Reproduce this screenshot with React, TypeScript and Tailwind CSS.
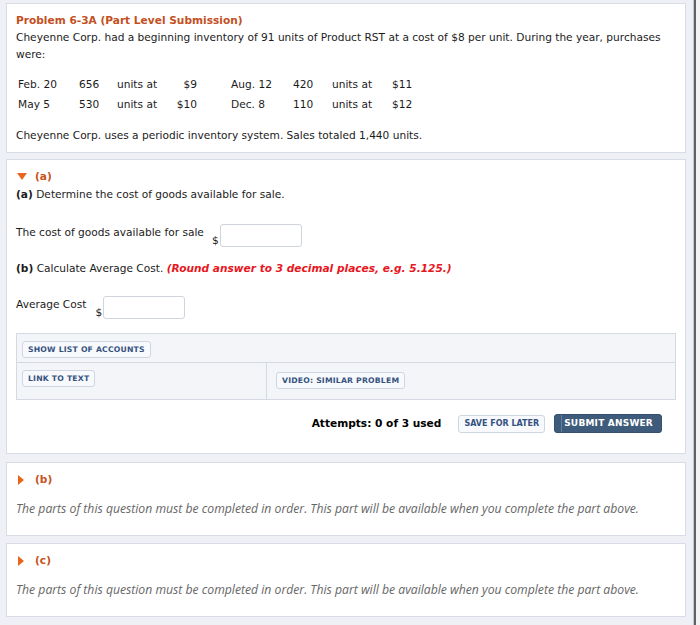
const body = { fontFamily: '"DejaVu Sans", Verdana, sans-serif' };
const note = { fontFamily: '"Open Sans", "DejaVu Sans", sans-serif' };

/**
 * Small toolbar button
 */
const ToolButton = ({ label }: { label: string }) => (
  <button className="h-[17px] px-[5px] rounded-[3px] border border-[#cfd5e1] bg-[#f8f9fc] text-[7.7px] font-bold text-[#34527f] leading-none tracking-[0.2px]">
    {label}
  </button>
);

const DownTriangle = () => (
  <svg width="10" height="7" viewBox="0 0 10 7" className="mr-[8px]">
    <path d="M0 0 H10 L5 7 Z" fill="#e8661c" />
  </svg>
);

const RightTriangle = () => (
  <svg width="6" height="10" viewBox="0 0 6 10" className="mr-[11px]">
    <path d="M0 0 L6 5 L0 10 Z" fill="#e8661c" />
  </svg>
);

const purchases = [
  { a: ['Feb. 20', '656', '$9'], b: ['Aug. 12', '420', '$11'] },
  { a: ['May 5', '530', '$10'], b: ['Dec. 8', '110', '$12'] },
];

/**
 * Locked part card (b), (c)
 */
const LockedPart = ({ letter, className }: { letter: string; className: string }) => (
  <div className={`bg-white border border-[#d8dce6] px-[9px] pt-[8px] pb-[18px] ${className}`}>
    <div className="flex items-center h-[17px] pl-[2px]">
      <RightTriangle />
      <span className="text-[10.6px] font-bold text-[#c9521d]">({letter})</span>
    </div>
    <p style={note} className="mt-[12px] text-[12.2px] leading-[17px] italic text-[#666]">
      The parts of this question must be completed in order. This part will be available when you complete the part above.
    </p>
  </div>
);

export default function App() {
  return (
    <div style={body} className="min-h-screen bg-[#eef0f5] flex text-[#1b1b1b]">
      <div className="flex-1 pl-[6px] pr-[7px] pt-[3px] flex flex-col">
        {/* Problem statement */}
        <div className="bg-white border border-[#d8dce6] px-[9px] pt-[8px] pb-[8px] text-[10.6px] leading-[17px]">
          <h1 className="font-bold text-[#c4501f]">Problem 6-3A (Part Level Submission)</h1>
          <p>
            Cheyenne Corp. had a beginning inventory of 91 units of Product RST at a cost of $8 per unit. During the year, purchases were:
          </p>
          <div className="mt-[11px]">
            {purchases.map((row, i) => (
              <div key={i} className="flex items-center h-[20px]">
                <span className="w-[63px] pl-[2px]">{row.a[0]}</span>
                <span className="w-[38px]">{row.a[1]}</span>
                <span className="w-[48px]">units at</span>
                <span className="w-[32px] text-right">{row.a[2]}</span>
                <span className="w-[62px] ml-[34px]">{row.b[0]}</span>
                <span className="w-[39px]">{row.b[1]}</span>
                <span className="w-[60px]">units at</span>
                <span>{row.b[2]}</span>
              </div>
            ))}
          </div>
          <p className="mt-[13px]">Cheyenne Corp. uses a periodic inventory system. Sales totaled 1,440 units.</p>
        </div>

        {/* Part (a) */}
        <div className="mt-[6px] bg-white border border-[#d8dce6] px-[9px] pt-[7px] pb-[20px] text-[10.6px] leading-[17px]">
          <div className="flex items-center h-[19px] pl-[1px]">
            <DownTriangle />
            <span className="font-bold text-[#c9521d]">(a)</span>
          </div>
          <p>
            <span className="font-bold">(a)</span> Determine the cost of goods available for sale.
          </p>
          <div className="flex items-start h-[23px] mt-[21px]">
            <span>The cost of goods available for sale</span>
            <span className="ml-[8px] mt-[9px] leading-[14px]">$</span>
            <input className="ml-[1px] w-[82px] h-[23px] border border-[#cfd3da] rounded-[3px] bg-white" />
          </div>
          <p className="mt-[13px]">
            <span className="font-bold">(b)</span> Calculate Average Cost.{' '}
            <span className="font-bold italic text-[#e8161d]">(Round answer to 3 decimal places, e.g. 5.125.)</span>
          </p>
          <div className="flex items-start h-[23px] mt-[19px]">
            <span>Average Cost</span>
            <span className="ml-[9px] mt-[9px] leading-[14px]">$</span>
            <input className="ml-[1px] w-[82px] h-[23px] border border-[#cfd3da] rounded-[3px] bg-white" />
          </div>

          {/* Resource toolbar */}
          <div className="mt-[14px] border border-[#d5d9e3] bg-[#f4f5f9]">
            <div className="h-[29px] flex items-start pt-[7px] pl-[5px] border-b border-[#d5d9e3]">
              <ToolButton label="SHOW LIST OF ACCOUNTS" />
            </div>
            <div className="h-[36px] flex">
              <div className="w-[250px] pt-[6px] pl-[5px] border-r border-[#d5d9e3]">
                <ToolButton label="LINK TO TEXT" />
              </div>
              <div className="pt-[8px] pl-[9px]">
                <ToolButton label="VIDEO: SIMILAR PROBLEM" />
              </div>
            </div>
          </div>

          {/* Submission */}
          <div className="mt-[14px] flex items-center justify-end pr-[14px]">
            <span className="font-bold text-[10.6px] text-black">Attempts: 0 of 3 used</span>
            <button className="ml-[17px] h-[18px] px-[5px] rounded-[3px] border border-[#cfd5e1] bg-[#f8f9fc] text-[8px] font-bold text-[#34527f] leading-none">
              SAVE FOR LATER
            </button>
            <button className="ml-[9px] h-[19px] flex items-stretch rounded-[3px] bg-[#3e5b7b] text-white text-[9px] font-bold leading-none border border-[#33506f]">
              <span className="w-[7px] border-r border-[#6480a0]" />
              <span className="flex items-center pl-[2px] pr-[8px] tracking-[0.2px]">SUBMIT ANSWER</span>
            </button>
          </div>
        </div>

        <LockedPart letter="b" className="mt-[8px]" />
        <LockedPart letter="c" className="mt-[7px]" />
      </div>

      {/* window edge */}
      <div className="w-[7px] flex">
        <div className="w-px bg-[#c4c6cc]" />
        <div className="w-[2px] bg-[#5f6166]" />
        <div className="flex-1 bg-[#f3f3f3]" />
      </div>
    </div>
  );
}
